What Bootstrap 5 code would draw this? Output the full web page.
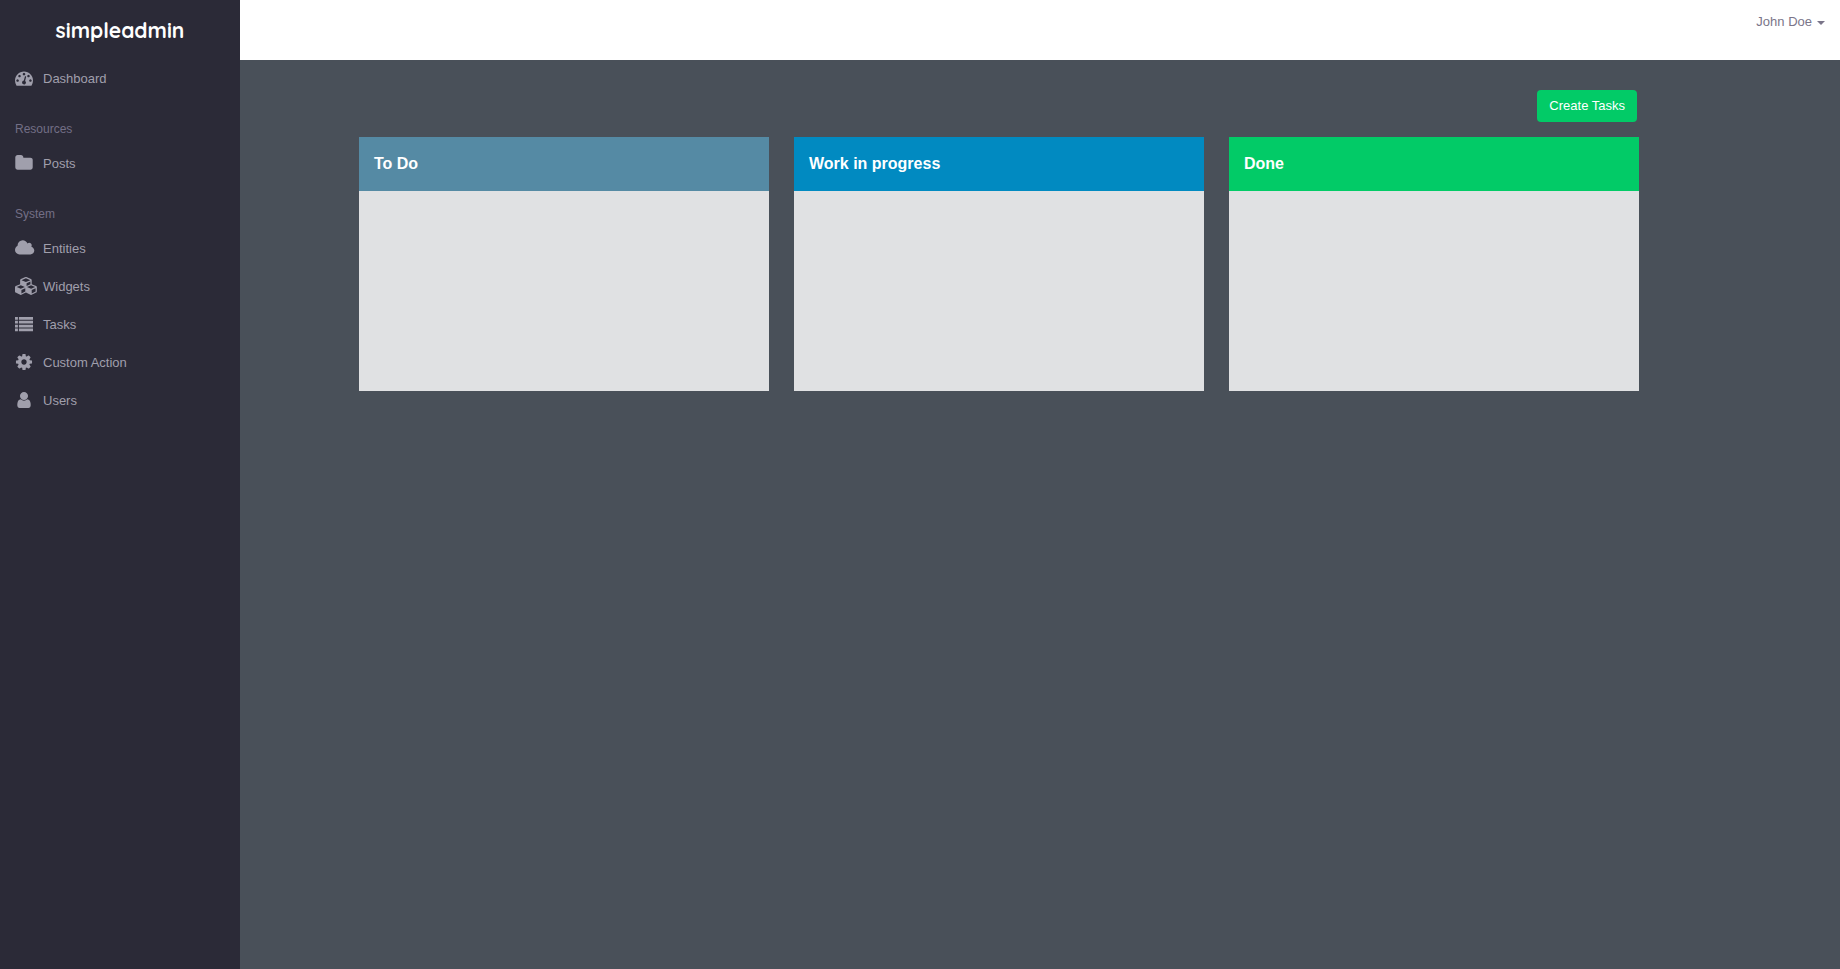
<!DOCTYPE html>
<html lang="en">
<head>
<meta charset="utf-8">
<meta name="viewport" content="width=device-width, initial-scale=1">
<title>simpleadmin</title>
<link rel="stylesheet" href="https://cdn.jsdelivr.net/npm/bootstrap@5.3.0/dist/css/bootstrap.min.css">
<style>
  body { font-family: "Liberation Sans", Arial, sans-serif; font-size: 13px; line-height: 20px; background: #495059; }
  .sidebar { width: 240px; background: #2b2a37; }
  .brand { height: 60px; font-family: Quicksand, Lato, sans-serif; font-size: 21px; font-weight: 700; color: #fff; }
  .side-link { height: 38px; padding: 0 15px; gap: 10px; color: #a09fac; }
  .side-link:hover { color: #fff; }
  .side-title { height: 47px; padding: 21px 15px 6px; font-size: 12px; color: #736f86; }
  .side-icon { width: 18px; height: 18px; margin-bottom: 2px; fill: currentColor; overflow: visible; flex: none; }
  .topbar { height: 60px; padding: 11px 15px; }
  .user-menu { color: #7a7589; font-size: 13px; line-height: 20px; }
  .user-menu::after { border-width: 4px; border-bottom: 0; margin-left: 5px; vertical-align: 1px; }
  .board-area { padding: 30px 201px 30px 119px; }
  .btn-create { height: 32px; padding: 0 12px; font-size: 13px; color: #fff; background: #02cb67; border-radius: 4px; margin: 0 2px 15px 0; }
  .btn-create:hover { color: #fff; background: #02b65c; }
  .board { gap: 25px; }
  .lane { flex: 1 1 0; min-width: 0; background: #e0e1e3; }
  .lane-title { padding: 15px; font-size: 16px; line-height: 24px; font-weight: 700; color: #fff; }
  .lane-body { min-height: 200px; }
  .lane-todo { background: #558aa4; }
  .lane-progress { background: #018ac1; }
  .lane-done { background: #02cb67; }
</style>
</head>
<body>
<div class="d-flex min-vh-100">
  <aside class="sidebar flex-shrink-0">
    <a href="#" class="brand d-flex align-items-center justify-content-center text-decoration-none">simpleadmin</a>
    <nav class="d-flex flex-column" aria-label="Main">
      <a href="#" class="side-link d-flex align-items-center text-decoration-none">
        <svg class="side-icon" viewBox="0 0 1792 1792" aria-hidden="true"><path d="M384 1152q0-53-37.500-90.500t-90.500-37.500-90.500 37.500-37.500 90.500 37.500 90.500 90.500 37.500 90.500-37.500 37.500-90.500zm192-448q0-53-37.500-90.500t-90.500-37.500-90.500 37.500-37.500 90.500 37.500 90.500 90.500 37.500 90.500-37.500 37.500-90.500zm428 481l101-382q6-26-7.500-48.500t-38.500-29.500-48 6.500-30 39.500l-101 382q-60 5-107 43.500t-63 98.500q-20 77 20 146t117 89 146-20 89-117q16-60-6-117t-72-91zm660-33q0-53-37.500-90.500t-90.500-37.500-90.500 37.500-37.500 90.500 37.500 90.500 90.500 37.500 90.500-37.500 37.500-90.500zm-640-640q0-53-37.500-90.500t-90.500-37.500-90.500 37.500-37.500 90.500 37.500 90.500 90.500 37.500 90.500-37.500 37.500-90.500zm448 192q0-53-37.500-90.500t-90.500-37.500-90.500 37.500-37.500 90.500 37.500 90.500 90.500 37.500 90.500-37.500 37.500-90.500zm320 448q0 261-141 483-19 29-54 29h-1402q-35 0-54-29-141-221-141-483 0-182 71-348t191-286 286-191 348-71 348 71 286 191 191 286 71 348z"/></svg>
        <span>Dashboard</span>
      </a>
      <div class="side-title">Resources</div>
      <a href="#" class="side-link d-flex align-items-center text-decoration-none">
        <svg class="side-icon" viewBox="36 36 1720 1720" aria-hidden="true"><path d="M1728 608v704q0 92-66 158t-158 66h-1216q-92 0-158-66t-66-158v-960q0-92 66-158t158-66h320q92 0 158 66t66 158v32h672q92 0 158 66t66 158z"/></svg>
        <span>Posts</span>
      </a>
      <div class="side-title">System</div>
      <a href="#" class="side-link d-flex align-items-center text-decoration-none">
        <svg class="side-icon" viewBox="64 0 1792 1792" aria-hidden="true"><path d="M1984 1152q0 159-112.500 271.500t-271.500 112.500h-1088q-185 0-316.500-131.500t-131.500-316.500q0-132 71-241.500t187-163.500q-2-28-2-43 0-212 150-362t362-150q158 0 286.500 88t187.500 230q70-62 166-62 106 0 181 75t75 181q0 75-41 138 129 30 213 134.500t84 239.500z"/></svg>
        <span>Entities</span>
      </a>
      <a href="#" class="side-link d-flex align-items-center text-decoration-none">
        <svg class="side-icon" viewBox="0 0 1792 1792" aria-hidden="true"><path d="M640 1632l384-192v-314l-384 164v342zm-64-454l404-173-404-173-404 173zm1088 454l384-192v-314l-384 164v342zm-64-454l404-173-404-173-404 173zm-448-293l384-165v-266l-384 164v267zm-64-379l441-189-441-189-441 189zm1088 518v416q0 36-19 67t-52 47l-448 224q-25 14-57 14t-57-14l-448-224q-4-2-7-4-2 2-7 4l-448 224q-25 14-57 14t-57-14l-448-224q-33-16-52-47t-19-67v-416q0-38 21.500-70t56.500-48l434-186v-400q0-38 21.500-70t56.500-48l448-192q23-10 50-10t50 10l448 192q35 16 56.500 48t21.500 70v400l434 186q36 16 57 48t21 70z"/></svg>
        <span>Widgets</span>
      </a>
      <a href="#" class="side-link d-flex align-items-center text-decoration-none">
        <svg class="side-icon" viewBox="0 0 1792 1792" aria-hidden="true"><path d="M0 200h290v270H0zM390 200h1402v270H390zM0 584h290v270H0zM390 584h1402v270H390zM0 968h290v270H0zM390 968h1402v270H390zM0 1352h290v270H0zM390 1352h1402v270H390z"/></svg>
        <span>Tasks</span>
      </a>
      <a href="#" class="side-link d-flex align-items-center text-decoration-none">
        <svg class="side-icon" viewBox="36 36 1720 1720" aria-hidden="true"><path d="M1152 896q0-106-75-181t-181-75-181 75-75 181 75 181 181 75 181-75 75-181zm512-109v222q0 12-8 23t-20 13l-185 28q-19 54-39 91 35 50 107 138 10 12 10 25t-9 23q-27 37-99 108t-94 71q-12 0-26-9l-138-108q-44 23-91 38-16 136-29 186-7 28-36 28h-222q-14 0-24.500-8.500t-11.500-21.500l-28-184q-49-16-90-37l-141 107q-10 9-25 9-14 0-25-11-126-114-165-168-7-10-7-23 0-12 8-23 15-21 51-66.500t54-70.500q-27-50-41-99l-183-27q-13-2-21-12.500t-8-23.500v-222q0-12 8-23t19-13l186-28q14-46 39-92-40-57-107-138-10-12-10-24 0-10 9-23 26-36 98.500-107.500t94.500-71.500q13 0 26 10l138 107q44-23 91-38 16-136 29-186 7-28 36-28h222q14 0 24.500 8.500t11.500 21.500l28 184q49 16 90 37l142-107q9-9 24-9 13 0 25 10 129 119 165 170 7 8 7 22 0 12-8 23-15 21-51 66.500t-54 70.500q26 50 41 98l183 28q13 2 21 12.500t8 23.500z"/></svg>
        <span>Custom Action</span>
      </a>
      <a href="#" class="side-link d-flex align-items-center text-decoration-none">
        <svg class="side-icon" viewBox="36 36 1720 1720" aria-hidden="true"><path d="M1536 1399q0 109-62.500 187t-150.500 78h-854q-88 0-150.500-78t-62.500-187q0-85 8.500-160.500t31.500-152 58.500-131 94-89 134.500-34.500q131 128 313 128t313-128q76 0 134.500 34.500t94 89 58.500 131 31.500 152 8.500 160.500zm-256-887q0 159-112.500 271.500t-271.500 112.500-271.500-112.500-112.500-271.500 112.500-271.500 271.500-112.500 271.500 112.500 112.500 271.500z"/></svg>
        <span>Users</span>
      </a>
    </nav>
  </aside>
  <div class="flex-grow-1">
    <header class="topbar bg-white d-flex justify-content-end align-items-start">
      <div class="dropdown">
        <button type="button" class="user-menu btn border-0 p-0 dropdown-toggle" data-bs-toggle="dropdown" aria-expanded="false">John Doe</button>
        <ul class="dropdown-menu dropdown-menu-end"><li><a class="dropdown-item" href="#">Logout</a></li></ul>
      </div>
    </header>
    <main class="board-area">
      <div class="d-flex justify-content-end">
        <button type="button" class="btn btn-create border-0">Create Tasks</button>
      </div>
      <div class="board d-flex">
        <section class="lane"><h2 class="lane-title lane-todo m-0">To Do</h2><div class="lane-body"></div></section>
        <section class="lane"><h2 class="lane-title lane-progress m-0">Work in progress</h2><div class="lane-body"></div></section>
        <section class="lane"><h2 class="lane-title lane-done m-0">Done</h2><div class="lane-body"></div></section>
      </div>
    </main>
  </div>
</div>
<script src="https://cdn.jsdelivr.net/npm/bootstrap@5.3.0/dist/js/bootstrap.bundle.min.js"></script>
</body>
</html>
